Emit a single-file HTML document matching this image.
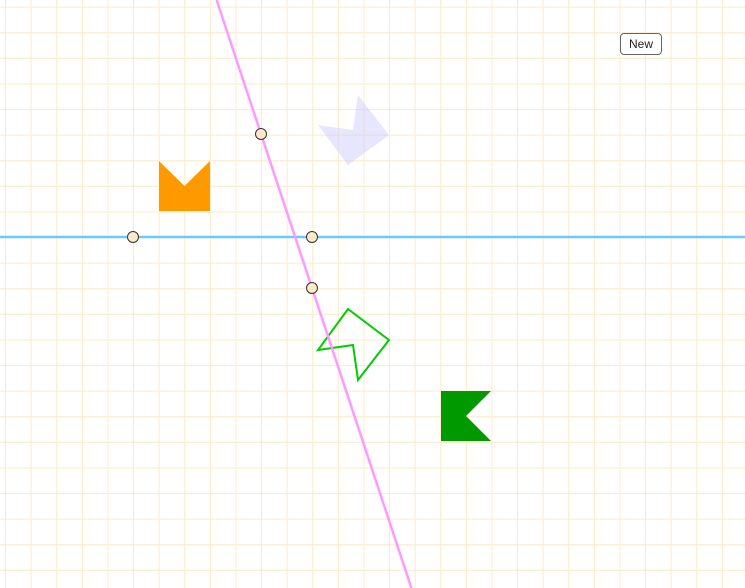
<!DOCTYPE html>
<html><head><meta charset="utf-8"><style>
html,body{margin:0;padding:0;width:745px;height:588px;overflow:hidden;background:#fff}
svg{position:absolute;left:0;top:0}
.btn{position:absolute;left:620px;top:33px;width:40px;height:20px;border:1.5px solid #666;border-radius:4px;background:#fff;font:12px "Liberation Sans",sans-serif;color:#222;text-align:center;line-height:20px}
</style></head><body>
<svg width="745" height="588" viewBox="0 0 745 588">
<defs><pattern id="g" x="5" y="6.6" width="25.6" height="25.6" patternUnits="userSpaceOnUse">
<path d="M0.5 0V25.6M0 0.5H25.6" stroke="#fdeccc" stroke-width="1.2" fill="none"/></pattern></defs>
<rect width="745" height="588" fill="url(#g)"/>
<polygon points="159,161 184.5,186 210,161 210,211 159,211" fill="#ff9900"/>
<polygon points="358,95 389,135 348,165 318,125 353,130" fill="rgba(200,200,255,0.45)"/>
<polygon points="441,391 491,391 466,416 491,441 441,441" fill="#009900"/>
<polygon points="348,309 389,340 358,380 353,345 318,350" fill="none" stroke="#00cc00" stroke-width="2"/>
<line x1="0" y1="237" x2="745" y2="237" stroke="#66ccff" stroke-width="2.5"/>
<line x1="216.6" y1="0" x2="411.4" y2="588" stroke="#ff99ff" stroke-width="2.5"/>
<g fill="#fde8c8" stroke="#333" stroke-width="1">
<circle cx="133" cy="237" r="5.5"/><circle cx="312" cy="237" r="5.5"/>
<circle cx="261" cy="134" r="5.5"/><circle cx="312" cy="288" r="5.5"/></g>
</svg>
<div class="btn">New</div>
</body></html>
